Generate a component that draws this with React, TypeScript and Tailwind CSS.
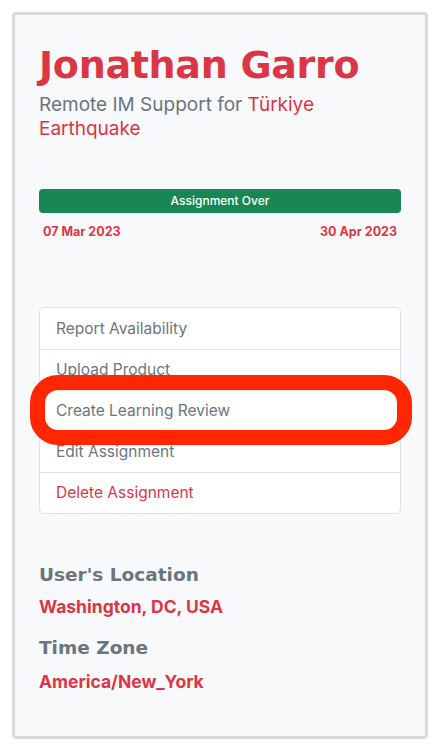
import React from 'react';

const items = [
  { label: 'Report Availability' },
  { label: 'Upload Product' },
  { label: 'Create Learning Review', marked: true },
  { label: 'Edit Assignment' },
  { label: 'Delete Assignment', danger: true },
];

export default function App() {
  return (
    <div className="min-h-[751px] bg-white p-[12px] font-['Inter',sans-serif]">
      <div className="h-[727px] rounded-[4px] border-[3px] border-[#d9dadb] bg-[#f8f9fa] px-[24px] pt-[28px]">
        {/* Kdo a kde */}
        <h1 className="font-['DejaVu_Sans',sans-serif] text-[38px] font-bold leading-[44px] tracking-[-0.3px] text-[#dc3545]">
          Jonathan Garro
        </h1>
        <p className="mt-[6px] text-[19px] leading-[24px] text-[#6c757d]">
          Remote IM Support for <span className="text-[#dc3545]">Türkiye Earthquake</span>
        </p>

        {/* Průběh nasazení */}
        <div className="mt-[48px] flex h-[24px] items-center justify-center rounded-[4px] bg-[#198754] text-[12px] font-medium text-white">
          Assignment Over
        </div>
        <div className="mt-[10px] flex justify-between px-[4px] text-[12.5px] font-bold text-[#dc3545]">
          <span>07 Mar 2023</span>
          <span>30 Apr 2023</span>
        </div>

        {/* Akce */}
        <div className="relative mt-[65px] rounded-[5px] border border-[#dee2e6] bg-white">
          {items.map((it, i) => (
            <div
              key={it.label}
              className={`relative flex h-[41px] items-center px-[16px] text-[15.5px] ${i > 0 ? 'border-t border-[#dee2e6]' : ''} ${it.danger ? 'text-[#dc3545]' : 'text-[#6c757d]'}`}
            >
              {it.label}
              {it.marked && (
                <div className="absolute -top-[16px] -bottom-[14px] -left-[10px] -right-[12px] z-10 rounded-[28px] border-[15px] border-[#ff2600]" />
              )}
            </div>
          ))}
        </div>

        {/* Poloha */}
        <h2 className="mt-[48px] font-['DejaVu_Sans',sans-serif] text-[18.5px] font-bold leading-[26px] text-[#6c757d]">
          User's Location
        </h2>
        <p className="mt-[8px] text-[17.5px] font-bold leading-[22px] text-[#dc3545]">Washington, DC, USA</p>
        <h2 className="mt-[17px] font-['DejaVu_Sans',sans-serif] text-[18.5px] font-bold leading-[26px] text-[#6c757d]">
          Time Zone
        </h2>
        <p className="mt-[10px] text-[17.5px] font-bold leading-[22px] text-[#dc3545]">America/New_York</p>
      </div>
    </div>
  );
}
